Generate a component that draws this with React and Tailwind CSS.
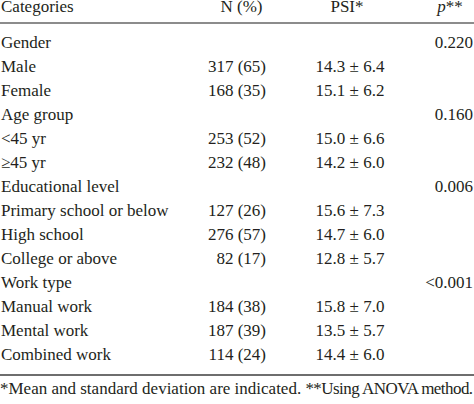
import React from "react";

const rows = [
  { c: "Gender", p: "0.220" },
  { c: "Male", n: "317 (65)", s: "14.3 ± 6.4" },
  { c: "Female", n: "168 (35)", s: "15.1 ± 6.2" },
  { c: "Age group", p: "0.160" },
  { c: "<45 yr", n: "253 (52)", s: "15.0 ± 6.6" },
  { c: "≥45 yr", n: "232 (48)", s: "14.2 ± 6.0" },
  { c: "Educational level", p: "0.006" },
  { c: "Primary school or below", n: "127 (26)", s: "15.6 ± 7.3" },
  { c: "High school", n: "276 (57)", s: "14.7 ± 6.0" },
  { c: "College or above", n: "82 (17)", s: "12.8 ± 5.7" },
  { c: "Work type", p: "<0.001" },
  { c: "Manual work", n: "184 (38)", s: "15.8 ± 7.0" },
  { c: "Mental work", n: "187 (39)", s: "13.5 ± 5.7" },
  { c: "Combined work", n: "114 (24)", s: "14.4 ± 6.0" },
];

export default function App() {
  return (
    <div className="w-[474px] h-[404px] bg-white text-[#231f20] font-['Liberation_Serif',serif] text-[17px] overflow-hidden">
      <div className="grid grid-cols-[190px_92px_136px_56px] h-[22px] leading-[14px]">
        <div className="pl-[1px]">Categories</div>
        <div className="text-center pl-[11px]">N (%)</div>
        <div className="text-center pr-[6px]">PSI*</div>
        <div className="text-center pl-[8px]">
          <span className="italic">p</span>**
        </div>
      </div>
      <div className="h-[2px] bg-[#8c8c8c]" />
      <div className="pt-[7px] leading-[24px]">
        {rows.map((r) => (
          <div key={r.c} className="grid grid-cols-[190px_92px_136px_56px] h-[24px]">
            <div className="pl-[1px] whitespace-nowrap">{r.c}</div>
            <div className="text-right pr-[16px] whitespace-nowrap">{r.n || ""}</div>
            <div className="text-center whitespace-nowrap">{r.s || ""}</div>
            <div className="text-right pr-[1px] whitespace-nowrap">{r.p || ""}</div>
          </div>
        ))}
      </div>
      <div className="mt-[7px] h-[2px] bg-[#6e6e6e]" />
      <div className="leading-[24px] pt-[1px] whitespace-nowrap">
        <span>*Mean and standard deviation are indicated.</span>{" "}
        <span className="tracking-[-0.55px]">**Using ANOVA method.</span>
      </div>
    </div>
  );
}
